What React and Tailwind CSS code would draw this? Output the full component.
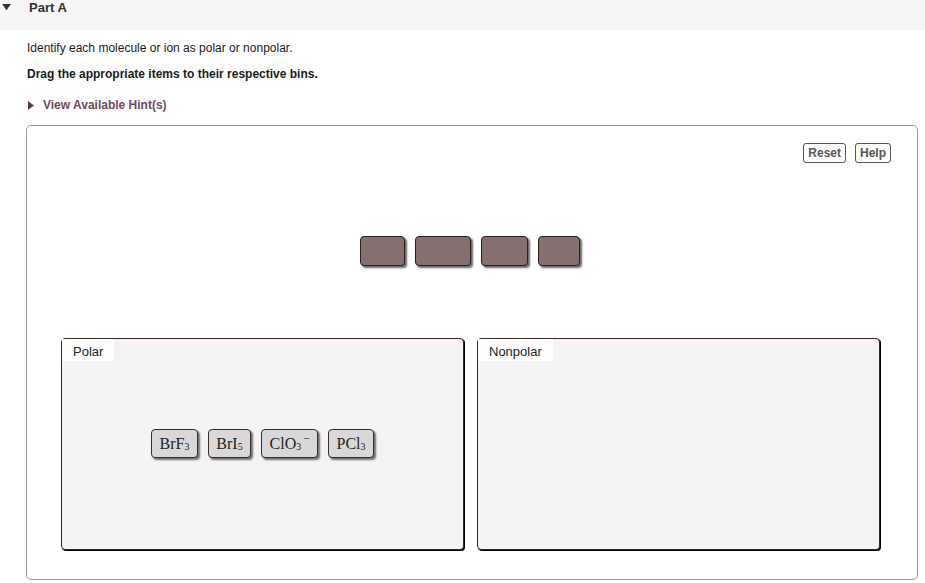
const Tile = ({ children, w }) => (
  <div
    className={`${w} h-[29px] flex items-center justify-center rounded-[4px] border border-[#3b2c2c] bg-[#d9d7d7] shadow-[2px_2px_2px_rgba(0,0,0,0.55)] text-[16px] text-[#222] leading-none`}
    style={{ fontFamily: '"Liberation Serif", "Times New Roman", serif' }}
  >
    {children}
  </div>
);

const Slot = ({ w }) => (
  <div className={`${w} h-[30px] rounded-[4px] border border-[#2b1f1f] bg-[#857070] shadow-[2px_2px_2px_rgba(0,0,0,0.6)]`} />
);

const Bin = ({ label, children }) => (
  <div className="relative w-[403px] h-[212px] rounded-[4px] border border-[#3a2525] bg-[#f4f4f4] shadow-[1px_1px_0_#000]">
    <div className="absolute left-0 top-0 h-[22px] bg-white pl-[11px] pr-[11px] pt-[3px] text-[13px] text-[#222]">
      {label}
    </div>
    {children}
  </div>
);

const App = () => {
  return (
    <div
      className="w-[925px] h-[583px] bg-white overflow-hidden text-[#1a1a1a]"
      style={{ fontFamily: '"Liberation Sans", Arial, sans-serif' }}
    >
      {/* Part header */}
      <div className="h-[30px] bg-[#f6f6f6] flex items-start">
        <svg width="9" height="7" viewBox="0 0 10 8" className="ml-[2px] mt-[4px]">
          <path d="M0 0 L10 0 L5 7 Z" fill="#333" />
        </svg>
        <span className="ml-[18px] -mt-[2px] text-[13px] font-bold text-[#333]">Part A</span>
      </div>

      <div className="pl-[27px]">
        <p className="mt-[9px] text-[12px]">Identify each molecule or ion as polar or nonpolar.</p>
        <p className="mt-[8px] text-[12px] font-bold">Drag the appropriate items to their respective bins.</p>
        <div className="mt-[13px] flex items-center">
          <svg width="6" height="9" viewBox="0 0 6 9" className="ml-[1px]">
            <path d="M0 0 L6 4.5 L0 9 Z" fill="#5b3d52" />
          </svg>
          <span className="ml-[9px] text-[12px] font-bold text-[#6b4a62]">View Available Hint(s)</span>
        </div>
      </div>

      {/* Main drag area */}
      <div className="ml-[26px] mt-[11px] w-[892px] h-[455px] rounded-[5px] border border-[#9a9a9a] flex flex-col">
        <div className="flex justify-end gap-[9px] pr-[26px] pt-[17px]">
          <button className="h-[20px] px-[4px] rounded-[3px] border border-[#555] bg-white text-[12px] font-bold text-[#555] leading-none">
            Reset
          </button>
          <button className="h-[20px] px-[4px] rounded-[3px] border border-[#555] bg-white text-[12px] font-bold text-[#555] leading-none">
            Help
          </button>
        </div>

        <div className="mt-[73px] flex justify-center gap-[10px] pr-[4px]">
          <Slot w="w-[45px]" />
          <Slot w="w-[56px]" />
          <Slot w="w-[47px]" />
          <Slot w="w-[42px]" />
        </div>

        <div className="mt-[72px] flex gap-[13px] pl-[34px]">
          <Bin label="Polar">
            <div className="absolute left-[89px] top-[90px] flex gap-[10px]">
              <Tile w="w-[47px]">
                BrF<sub className="text-[10px] relative top-[3px]">3</sub>
              </Tile>
              <Tile w="w-[43px]">
                BrI<sub className="text-[10px] relative top-[3px]">5</sub>
              </Tile>
              <Tile w="w-[57px]">
                ClO<sub className="text-[10px] relative top-[3px]">3</sub>
                <sup className="text-[11px] ml-[2px]">−</sup>
              </Tile>
              <Tile w="w-[46px]">
                PCl<sub className="text-[10px] relative top-[3px]">3</sub>
              </Tile>
            </div>
          </Bin>
          <Bin label="Nonpolar" />
        </div>
      </div>
    </div>
  );
};

export default App;
